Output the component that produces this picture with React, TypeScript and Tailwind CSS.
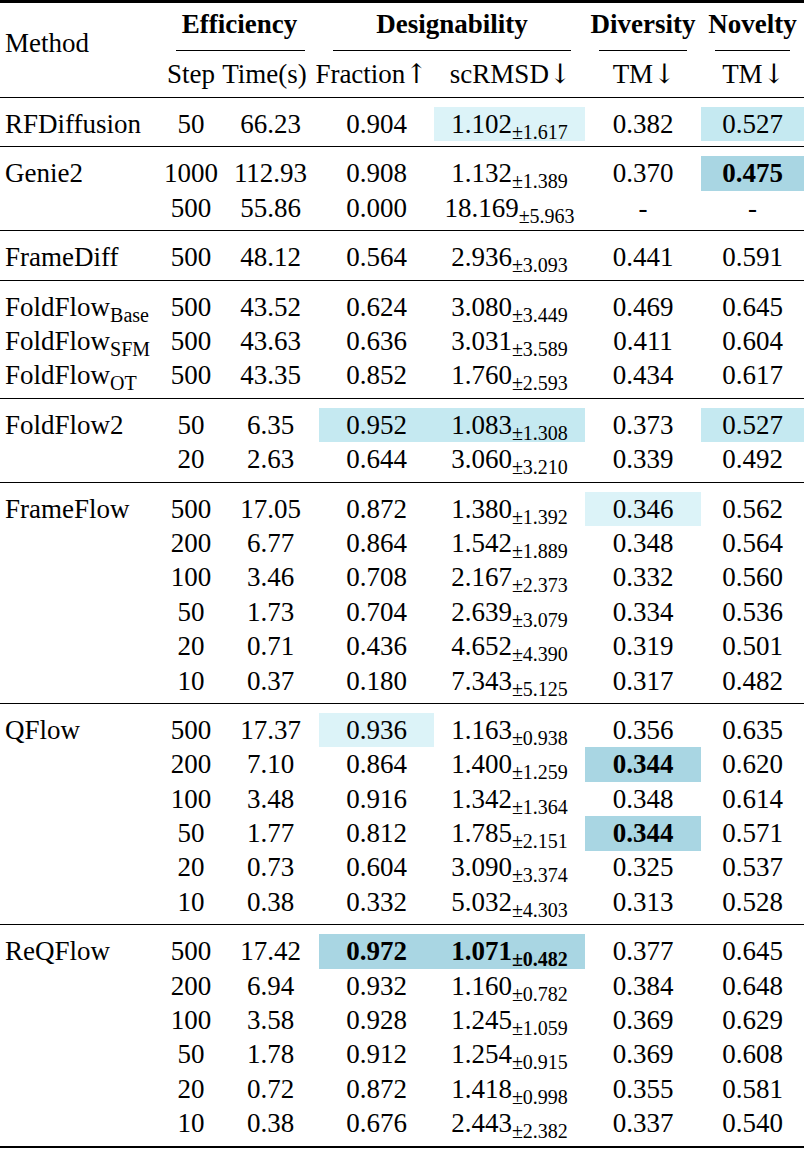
import React from "react";

type Hl = "l" | "m" | "d" | undefined;
type Cell = { v: string; sd?: string; hl?: Hl };
type Row = { step: string; time: string; frac: Cell; rmsd: Cell; div: Cell; nov: Cell };
type Group = { method: React.ReactNode; rows: Row[] };

const COLS = "grid grid-cols-[160px_62px_97px_115px_151px_116px_103px]";

const hlClass = (hl: Hl) =>
  hl === "l" ? "bg-[#dcf3f8]" : hl === "m" ? "bg-[#c5e9f1]" : hl === "d" ? "bg-[#a9d6e3] font-bold" : "";

// "l:", "m:", "d:" prefix = light / mid / dark (bold) highlight
function r(step: string, time: string, frac: string, rmsd: string, div: string, nov: string): Row {
  const parse = (s: string): Cell => {
    let hl: Hl;
    if (s.startsWith("l:") || s.startsWith("m:") || s.startsWith("d:")) {
      hl = s[0] as Hl;
      s = s.slice(2);
    }
    const [v, sd] = s.split("±");
    return { v, sd, hl };
  };
  return { step, time, frac: parse(frac), rmsd: parse(rmsd), div: parse(div), nov: parse(nov) };
}

function Sub({ children }: { children: React.ReactNode }) {
  return <sub className="text-[20px] bottom-[-6px]">{children}</sub>;
}

function Arrow({ up }: { up?: boolean }) {
  return (
    <span className="inline-block w-[0.75em] text-center text-black font-['DejaVu_Serif',serif] font-normal">
      {up ? "\u2191" : "\u2193"}
    </span>
  );
}

const groups: Group[] = [
  { method: "RFDiffusion", rows: [r("50", "66.23", "0.904", "l:1.102±1.617", "0.382", "m:0.527")] },
  {
    method: "Genie2",
    rows: [
      r("1000", "112.93", "0.908", "1.132±1.389", "0.370", "d:0.475"),
      r("500", "55.86", "0.000", "18.169±5.963", "-", "-"),
    ],
  },
  { method: "FrameDiff", rows: [r("500", "48.12", "0.564", "2.936±3.093", "0.441", "0.591")] },
  {
    method: (
      <div className="flex flex-col">
        <span>FoldFlow<Sub>Base</Sub></span>
        <span>FoldFlow<Sub>SFM</Sub></span>
        <span>FoldFlow<Sub>OT</Sub></span>
      </div>
    ),
    rows: [
      r("500", "43.52", "0.624", "3.080±3.449", "0.469", "0.645"),
      r("500", "43.63", "0.636", "3.031±3.589", "0.411", "0.604"),
      r("500", "43.35", "0.852", "1.760±2.593", "0.434", "0.617"),
    ],
  },
  {
    method: "FoldFlow2",
    rows: [
      r("50", "6.35", "m:0.952", "m:1.083±1.308", "0.373", "m:0.527"),
      r("20", "2.63", "0.644", "3.060±3.210", "0.339", "0.492"),
    ],
  },
  {
    method: "FrameFlow",
    rows: [
      r("500", "17.05", "0.872", "1.380±1.392", "l:0.346", "0.562"),
      r("200", "6.77", "0.864", "1.542±1.889", "0.348", "0.564"),
      r("100", "3.46", "0.708", "2.167±2.373", "0.332", "0.560"),
      r("50", "1.73", "0.704", "2.639±3.079", "0.334", "0.536"),
      r("20", "0.71", "0.436", "4.652±4.390", "0.319", "0.501"),
      r("10", "0.37", "0.180", "7.343±5.125", "0.317", "0.482"),
    ],
  },
  {
    method: "QFlow",
    rows: [
      r("500", "17.37", "l:0.936", "1.163±0.938", "0.356", "0.635"),
      r("200", "7.10", "0.864", "1.400±1.259", "d:0.344", "0.620"),
      r("100", "3.48", "0.916", "1.342±1.364", "0.348", "0.614"),
      r("50", "1.77", "0.812", "1.785±2.151", "d:0.344", "0.571"),
      r("20", "0.73", "0.604", "3.090±3.374", "0.325", "0.537"),
      r("10", "0.38", "0.332", "5.032±4.303", "0.313", "0.528"),
    ],
  },
  {
    method: "ReQFlow",
    rows: [
      r("500", "17.42", "d:0.972", "d:1.071±0.482", "0.377", "0.645"),
      r("200", "6.94", "0.932", "1.160±0.782", "0.384", "0.648"),
      r("100", "3.58", "0.928", "1.245±1.059", "0.369", "0.629"),
      r("50", "1.78", "0.912", "1.254±0.915", "0.369", "0.608"),
      r("20", "0.72", "0.872", "1.418±0.998", "0.355", "0.581"),
      r("10", "0.38", "0.676", "2.443±2.382", "0.337", "0.540"),
    ],
  },
];

function Value({ c }: { c: Cell }) {
  return (
    <div className={`flex items-center justify-center h-[34.4px] ${hlClass(c.hl)}`}>
      <span>
        {c.v}
        {c.sd && <Sub>±{c.sd}</Sub>}
      </span>
    </div>
  );
}

function GroupBlock({ g, last }: { g: Group; last: boolean }) {
  return (
    <div className={`${COLS} pt-[9px] pb-[5px] border-black ${last ? "border-b-[2.5px]" : "border-b"}`}>
      <div className="flex items-start pl-[5px] leading-[34.4px]" style={{ gridRow: `span ${g.rows.length}` }}>
        {g.method}
      </div>
      {g.rows.map((row, i) => (
        <React.Fragment key={i}>
          <div className="flex items-center justify-center h-[34.4px]" style={{ gridColumnStart: 2 }}>{row.step}</div>
          <div className="flex items-center justify-center h-[34.4px]">{row.time}</div>
          <Value c={row.frac} />
          <Value c={row.rmsd} />
          <Value c={row.div} />
          <Value c={row.nov} />
        </React.Fragment>
      ))}
    </div>
  );
}

function Header() {
  return (
    <div className="border-t-[3px] border-b border-black pt-[4px] pb-[5px]">
      <div className={`${COLS} grid-rows-[35px_15px_35px]`}>
        <div className="row-span-3 pl-[5px] pt-[19px] leading-[35px]">Method</div>
        <div className="col-span-2 flex items-center justify-center font-bold">Efficiency</div>
        <div className="col-span-2 flex items-center justify-center font-bold">Designability</div>
        <div className="flex items-center justify-center font-bold">Diversity</div>
        <div className="flex items-center justify-center font-bold">Novelty</div>

        <div className="col-span-2 pt-[8px] pl-[16px] pr-[14px]"><div className="h-px bg-black" /></div>
        <div className="col-span-2 pt-[8px] px-[14px]"><div className="h-px bg-black" /></div>
        <div className="pt-[8px] px-[14px]"><div className="h-px bg-black" /></div>
        <div className="pt-[8px] px-[14px]"><div className="h-px bg-black" /></div>

        <div className="flex items-center justify-center">Step</div>
        <div className="flex items-center justify-center whitespace-nowrap -ml-[12px]">Time(s)</div>
        <div className="flex items-center justify-center whitespace-nowrap -ml-[12px]">Fraction<Arrow up /></div>
        <div className="flex items-center justify-center">scRMSD<Arrow /></div>
        <div className="flex items-center justify-center">TM<Arrow /></div>
        <div className="flex items-center justify-center">TM<Arrow /></div>
      </div>
    </div>
  );
}

export default function App() {
  return (
    <div className="w-[804px] h-[1149px] overflow-hidden bg-white text-black text-[27px] font-['Liberation_Serif','Times_New_Roman',serif]">
      <Header />
      {groups.map((g, i) => (
        <GroupBlock key={i} g={g} last={i === groups.length - 1} />
      ))}
    </div>
  );
}
